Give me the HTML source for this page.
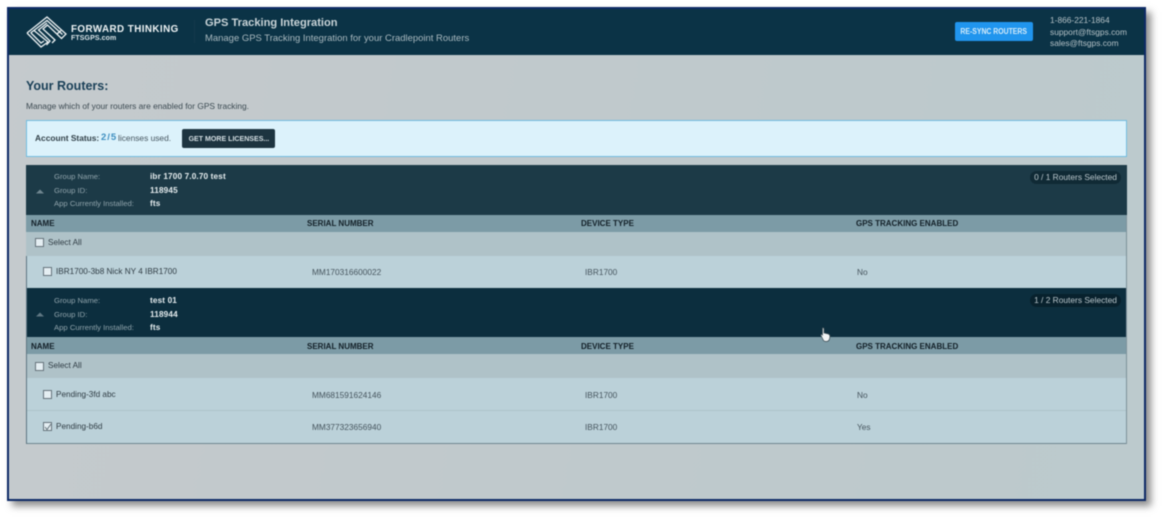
<!DOCTYPE html>
<html><head><meta charset="utf-8"><style>
html,body{margin:0;padding:0;background:#fff}
body{width:1170px;height:525px;overflow:hidden;position:relative;font-family:"Liberation Sans",sans-serif}
#w{position:absolute;left:0;top:0;width:1170px;height:525px;filter:blur(.45px)}
#w div{position:absolute;white-space:nowrap}
.frame{left:7px;top:7px;width:1135px;height:490px;border:2px solid #0d2a66;background:linear-gradient(100deg,#c5cacd,#bfc9cc 60%,#bccacd);box-shadow:5px 5px 7px rgba(80,80,80,.65)}
.hdr{left:9px;top:9px;width:1135px;height:46px;background:#0b3346}
.lab{font-size:7.7px;color:#8fa3ab}
.val{font-size:8.2px;color:#e6edef;font-weight:bold;letter-spacing:.15px}
.th{font-size:8px;font-weight:bold;color:#121f27}
.td{font-size:8.3px;color:#46555e}
.tn{font-size:8.2px;color:#2f3c44}
.cb{width:7px;height:7px;border:1px solid #66747c;background:#e4eef2}
.pill{height:13px;line-height:13px;border-radius:7px;font-size:8.4px;color:#b9c6cb;text-align:center}
.sq{display:inline-block;transform-origin:center}
</style></head><body><div id="w">
<div class="frame"></div>
<div class="hdr"></div>

<svg style="position:absolute;left:26px;top:16px" width="42" height="32" viewBox="0 0 42 32" fill="none" stroke="#eef3f4" stroke-width="1.300">
<path d="M1 17 L21 1 L40 18 L35.500 22.500 L21.500 9 L17 13 L29 24 L26 27"/>
<path d="M4.500 17 L21 4.500 L36.500 18.500"/>
<path d="M1 17 L15 31 L22 26 L8 14.500"/>
<path d="M5 17 L15 27 L18 25"/>
<path d="M21 7 L12.500 14 L24 25 L20.500 29"/>
<path d="M31 18 L35 14.500"/>
</svg>
<div style="left:71px;top:24px;font-size:9.800px;font-weight:bold;color:#eef3f4;letter-spacing:.45px">FORWARD THINKING</div>
<div style="left:71px;top:35px;font-size:7px;font-weight:bold;color:#d9e3e6;letter-spacing:.1px">FTSGPS.com</div>
<div style="left:194px;top:20px;width:1px;height:23px;background:#14394b"></div>
<div style="left:205px;top:17px;font-size:11.100px;font-weight:bold;color:#c9d4d8">GPS Tracking Integration</div>
<div style="left:205px;top:33px;font-size:9.480px;color:#a9b9bf">Manage GPS Tracking Integration for your Cradlepoint Routers</div>

<div style="left:955px;top:22px;width:78px;height:19px;line-height:19px;background:#2095ee;border-radius:2px;text-align:center;font-size:8px;font-weight:bold;color:#d6ecf9"><span class="sq" style="transform:scaleX(.86)">RE-SYNC ROUTERS</span></div>
<div style="left:1050px;top:15px;font-size:8.400px;color:#b3c0c5;line-height:11.500px;white-space:pre">1-866-221-1864
support@ftsgps.com
sales@ftsgps.com</div>

<div style="left:26px;top:79px;font-size:12.500px;font-weight:bold;color:#1a4058">Your Routers:</div>
<div style="left:26px;top:101px;font-size:8.400px;color:#3c4a52">Manage which of your routers are enabled for GPS tracking.</div>

<div style="left:26px;top:120px;width:1099px;height:35px;background:#dcf2fb;border:1px solid #72bde0"></div>
<div style="left:35px;top:133px;font-size:8.400px;font-weight:bold;color:#33424a">Account Status:</div>
<div style="left:101px;top:132px;font-size:9.500px;font-weight:bold;color:#3f8fc0;letter-spacing:1px">2/5</div>
<div style="left:118px;top:133px;font-size:8.400px;color:#465660">licenses used.</div>
<div style="left:182px;top:129px;width:93px;height:19px;line-height:19px;background:#1d3440;border-radius:2px;text-align:center;font-size:7.500px;font-weight:bold;color:#d5dfe3"><span class="sq" style="transform:scaleX(.94)">GET MORE LICENSES...</span></div>

<!-- group 1 -->
<div style="left:26px;top:165px;width:1101px;height:50px;background:#1c3a47"></div>
<svg style="position:absolute;left:36px;top:189px" width="8" height="5"><path d="M0 4.500 L4 0.500 L8 4.500Z" fill="#708690"/></svg>
<div class="lab" style="left:54px;top:172px">Group Name:</div>
<div class="lab" style="left:54px;top:186px">Group ID:</div>
<div class="lab" style="left:54px;top:199px">App Currently Installed:</div>
<div class="val" style="left:150px;top:172px">ibr 1700 7.0.70 test</div>
<div class="val" style="left:150px;top:186px">118945</div>
<div class="val" style="left:150px;top:199px">fts</div>
<div class="pill" style="left:1030px;top:171px;width:91px;background:#102a35">0 / 1 Routers Selected</div>
<div style="left:26px;top:215px;width:1101px;height:17px;background:#7c9ba6"></div>
<div class="th" style="left:31px;top:219px">NAME</div>
<div class="th" style="left:307px;top:219px">SERIAL NUMBER</div>
<div class="th" style="left:581px;top:219px">DEVICE TYPE</div>
<div class="th" style="left:856px;top:219px">GPS TRACKING ENABLED</div>
<div style="left:26px;top:232px;width:1101px;height:24px;background:#afc2c8"></div>
<div class="cb" style="left:35px;top:238px"></div>
<div class="tn" style="left:48px;top:238px">Select All</div>
<div style="left:26px;top:256px;width:1101px;height:32px;background:#bbd1d9"></div>
<div class="cb" style="left:43px;top:267px"></div>
<div class="tn" style="left:56px;top:267px">IBR1700-3b8 Nick NY 4 IBR1700</div>
<div class="td" style="left:312px;top:267px">MM170316600022</div>
<div class="td" style="left:585px;top:267px">IBR1700</div>
<div class="td" style="left:857px;top:267px">No</div>

<!-- group 2 -->
<div style="left:26px;top:288px;width:1101px;height:49px;background:#0c2e3e"></div>
<svg style="position:absolute;left:36px;top:312px" width="8" height="5"><path d="M0 4.500 L4 0.500 L8 4.500Z" fill="#5f7783"/></svg>
<div class="lab" style="left:54px;top:296px">Group Name:</div>
<div class="lab" style="left:54px;top:310px">Group ID:</div>
<div class="lab" style="left:54px;top:323px">App Currently Installed:</div>
<div class="val" style="left:150px;top:296px">test 01</div>
<div class="val" style="left:150px;top:310px">118944</div>
<div class="val" style="left:150px;top:323px">fts</div>
<div class="pill" style="left:1030px;top:294px;width:91px;background:#08212d">1 / 2 Routers Selected</div>
<div style="left:26px;top:337px;width:1101px;height:17px;background:#7c9ba6"></div>
<div class="th" style="left:31px;top:342px">NAME</div>
<div class="th" style="left:307px;top:342px">SERIAL NUMBER</div>
<div class="th" style="left:581px;top:342px">DEVICE TYPE</div>
<div class="th" style="left:856px;top:342px">GPS TRACKING ENABLED</div>
<div style="left:26px;top:354px;width:1101px;height:24px;background:#afc2c8"></div>
<div class="cb" style="left:35px;top:362px"></div>
<div class="tn" style="left:48px;top:361px">Select All</div>
<div style="left:26px;top:378px;width:1101px;height:65px;background:#bbd1d9;border-bottom:1.500px solid #6f8790"></div>
<div style="left:26px;top:410px;width:1101px;height:1px;background:#aec3ca"></div>
<div class="cb" style="left:43px;top:390px"></div>
<div class="tn" style="left:56px;top:390px">Pending-3fd abc</div>
<div class="td" style="left:312px;top:390px">MM681591624146</div>
<div class="td" style="left:585px;top:390px">IBR1700</div>
<div class="td" style="left:857px;top:390px">No</div>
<div class="cb" style="left:43px;top:422px"></div>
<svg style="position:absolute;left:44px;top:423px" width="8" height="8" fill="none" stroke="#66747c" stroke-width="1"><path d="M1 4 L3 6.500 L7 1"/></svg>
<div class="tn" style="left:56px;top:422px">Pending-b6d</div>
<div class="td" style="left:312px;top:422px">MM377323656940</div>
<div class="td" style="left:585px;top:422px">IBR1700</div>
<div class="td" style="left:857px;top:422px">Yes</div>

<!-- table edges -->
<div style="left:26px;top:256px;width:1px;height:188px;background:#5d7682"></div>
<div style="left:1126px;top:215px;width:1px;height:229px;background:#7d929b"></div>

<!-- cursor -->
<svg style="position:absolute;left:820px;top:327px" width="11" height="15" viewBox="0 0 11 15"><path d="M2.500 1 C3.500 .5 4 1 4 2 L4 6 L8.500 7 C9.500 7.500 10 8 10 9.500 L9.500 12 C9 14 8 14.500 6 14.500 C4.500 14.500 3.500 14 3 12.500 L1 8.500 C.5 7.500 1.500 7 2.500 8 Z" fill="#f2f4f4" stroke="#3a4a52" stroke-width=".7"/></svg>
</div></body></html>
